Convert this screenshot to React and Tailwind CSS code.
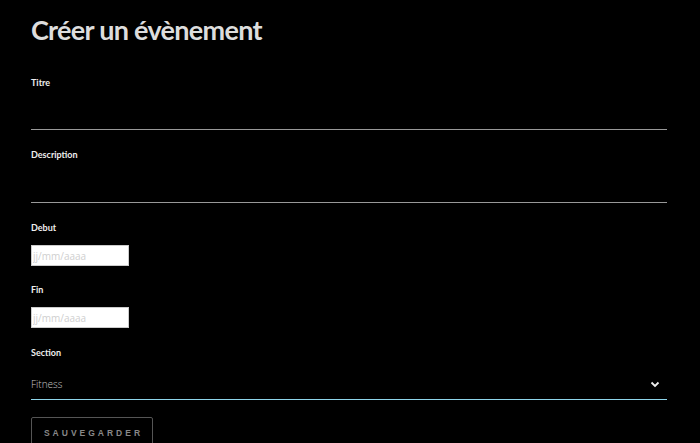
import React from "react";

const labelCls = "block h-[12px] text-[9px] leading-[12px] font-bold text-[#eeeeee]";

function Field({ label, className, children }) {
  return (
    <div className={className}>
      <label className={labelCls} style={{ fontFamily: "Lato, sans-serif" }}>
        {label}
      </label>
      {children}
    </div>
  );
}

function DateInput() {
  return (
    <input
      type="text"
      placeholder="jj/mm/aaaa"
      className="mt-[11px] block h-[21px] w-[98px] border border-[#cccccc] bg-white px-[1px] text-[10px] text-[#333] placeholder:text-[#cfcfcf] outline-none"
      style={{ fontFamily: "'Open Sans', sans-serif" }}
    />
  );
}

export default function App() {
  return (
    <div
      className="min-h-[443px] w-full overflow-hidden bg-black pl-[31px] pr-[33px]"
      style={{ fontFamily: "'Open Sans', 'Liberation Sans', sans-serif" }}
    >
      <h1
        className="pt-[12px] text-[27px] leading-[36px] font-bold tracking-[-0.7px] text-[#dddddd]"
        style={{ fontFamily: "Lato, sans-serif" }}
      >
        Créer un évènement
      </h1>

      <Field label="Titre" className="mt-[29px]">
        <input className="block h-[41px] w-full border-b border-[#999999] bg-transparent outline-none" />
      </Field>

      <Field label="Description" className="mt-[19px]">
        <input className="block h-[42px] w-full border-b border-[#999999] bg-transparent outline-none" />
      </Field>

      <Field label="Debut" className="mt-[19px]">
        <DateInput />
      </Field>

      <Field label="Fin" className="mt-[18px]">
        <DateInput />
      </Field>

      <Field label="Section" className="mt-[19px]">
        <div className="mt-[11px] flex h-[30px] w-full items-center justify-between border-b border-[#8fd5ea]">
          <span className="text-[10px] font-light text-[#c4c4c4]">Fitness</span>
          <svg width="10" height="7" viewBox="0 0 10 7" className="mr-[7px]">
            <path d="M1.5 1.5 L5 5 L8.5 1.5" stroke="#eeeeee" strokeWidth="1.8" fill="none" />
          </svg>
        </div>
      </Field>

      <button
        className="mt-[17px] flex h-[32px] w-[122px] items-center justify-center rounded-[2px] border border-[#555555] bg-transparent pl-[3px] text-[8.5px] font-bold tracking-[3px] text-[#888888]"
        style={{ fontFamily: "'Liberation Sans', sans-serif" }}
      >
        SAUVEGARDER
      </button>
    </div>
  );
}
